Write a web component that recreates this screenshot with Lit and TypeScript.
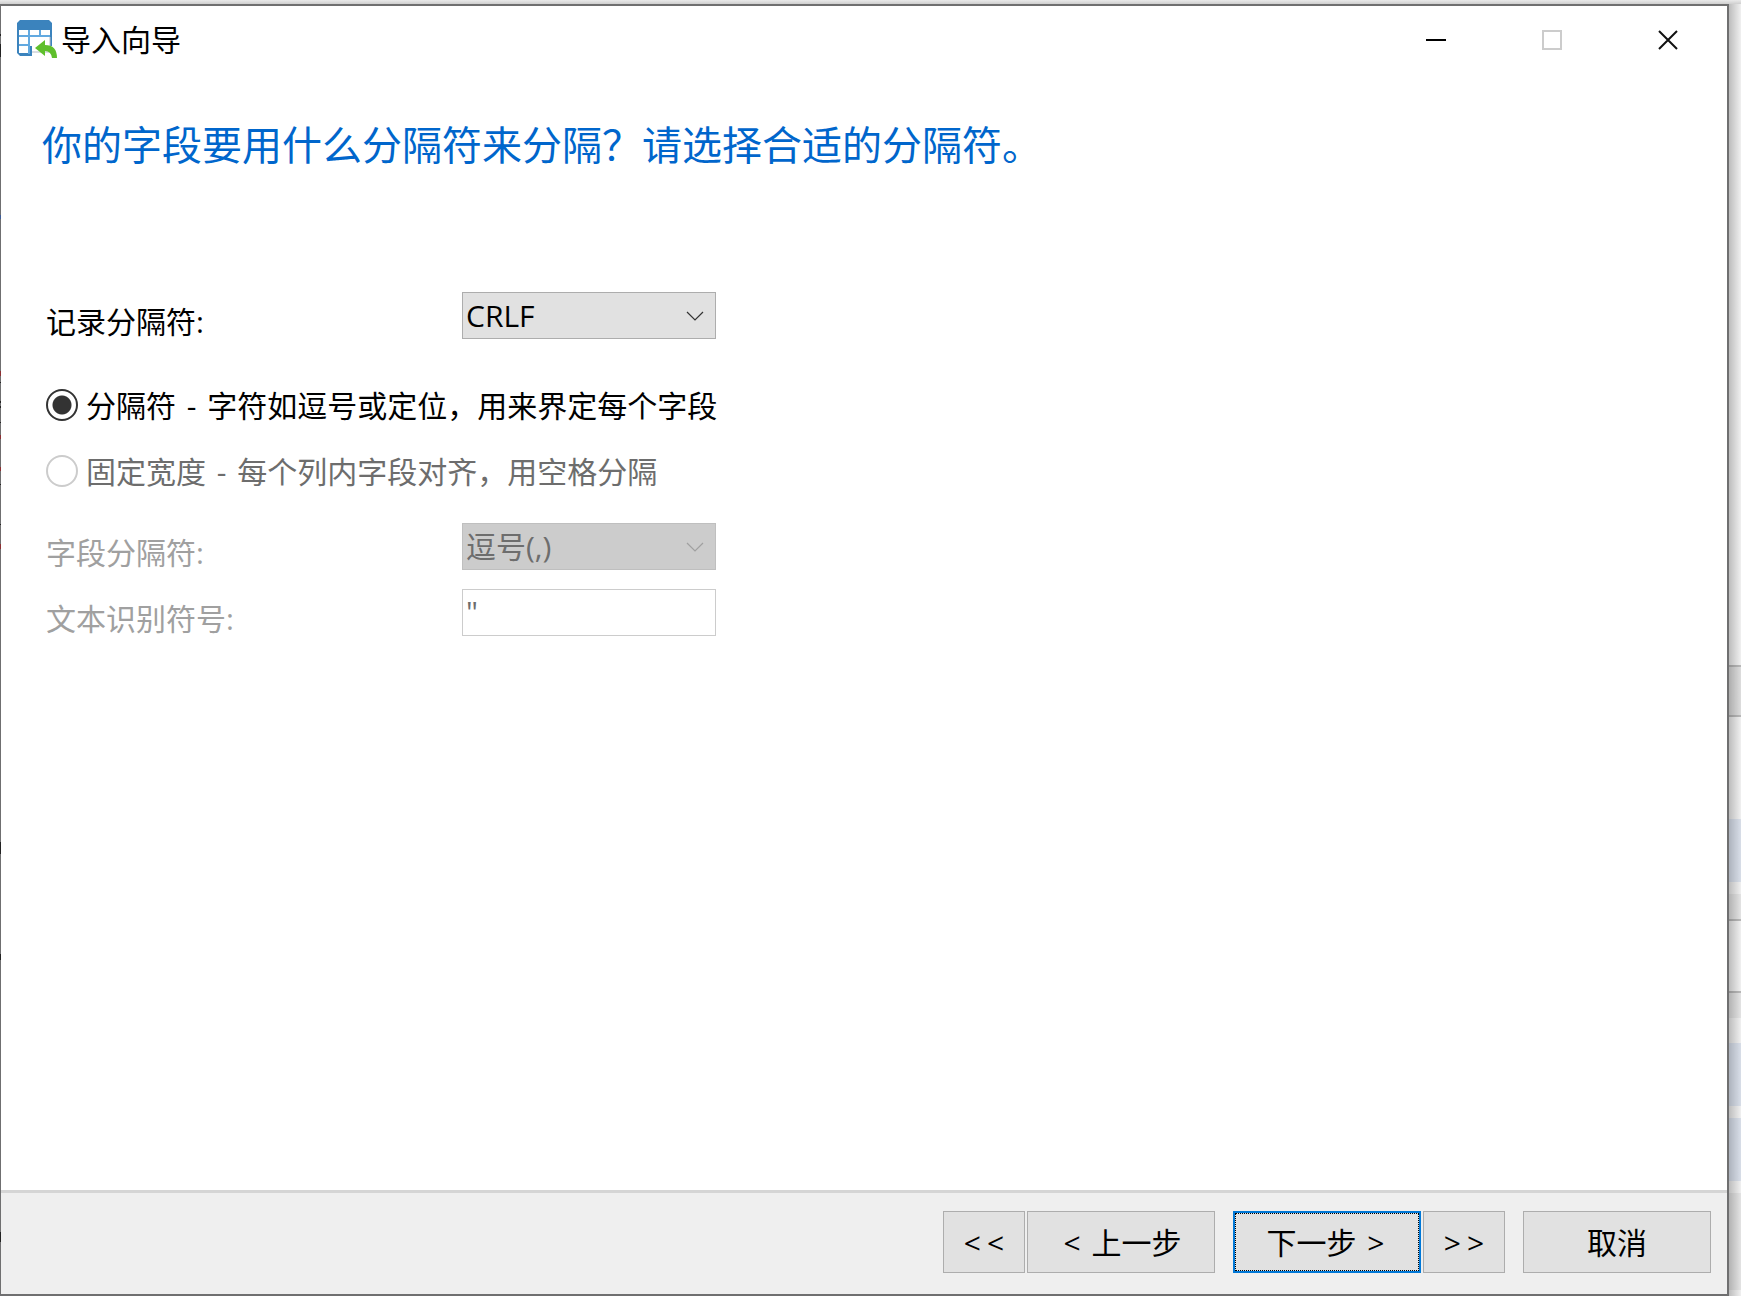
import { LitElement, html, svg, css } from "lit";
import { customElement, state } from "lit/decorators.js";

const chevron = svg`<path d="M1 1 L9 9 L17 1" fill="none" stroke="currentColor" stroke-width="1.2"/>`;

@customElement("app-root")
export class AppRoot extends LitElement {
  @state() private mode = "delimited";

  static styles = css`
    :host {
      display: block;
      min-height: 100vh;
      box-sizing: border-box;
      font-family: "Open Sans", "Noto Sans CJK SC", sans-serif;
      font-size: 30px;
      line-height: 40px;
      color: #000;
    }
    * { box-sizing: border-box; }
    .desktop {
      display: grid;
      grid-template-columns: 1px minmax(0, 1fr) 12px;
      grid-template-rows: 4px 1fr;
      min-height: 100vh;
      background: #f6f6f6;
    }
    .top-shade {
      grid-column: 1 / 4;
      background: linear-gradient(to bottom, #eaeaea, #cfcfcf);
    }
    .edge { background: #6f6f70; }
    .edge svg { width: 1px; height: 100%; display: block; }
    .window {
      display: flex;
      flex-direction: column;
      background: #fff;
      border: 2px solid #6f6f70;
      border-left: 0;
    }
    .behind {
      background: linear-gradient(to right, rgba(0,0,0,.24), rgba(0,0,0,.03)), #f8f8f8;
    }
    .behind svg { width: 12px; height: 100%; display: block; }
    .titlebar {
      display: flex;
      align-items: center;
      height: 68px;
      padding: 0 1px 0 16px;
    }
    .logo { width: 40px; height: 40px; }
    .title { margin: 0 auto 0 4px; font-size: 30px; font-weight: 400; }
    .caption {
      width: 116px;
      height: 68px;
      padding: 0;
      border: 0;
      background: none;
      display: flex;
      align-items: center;
      justify-content: center;
    }
    .caption svg { width: 20px; height: 20px; }
    .content {
      flex: 1;
      padding: 41px 41px 0;
    }
    .question {
      margin: 0 0 117px;
      font-size: 40px;
      line-height: 60px;
      font-weight: 400;
      color: #0066cc;
    }
    .form { padding-left: 4px; }
    .row {
      display: grid;
      grid-template-columns: 416px 254px;
      align-items: start;
      height: 66px;
    }
    .row label { padding-top: 10px; }
    .muted { color: #a0a0a0; }
    .combo { display: grid; }
    .combo select, .combo svg { grid-area: 1 / 1; }
    .combo svg {
      width: 18px;
      height: 10px;
      align-self: center;
      justify-self: end;
      margin-right: 12px;
      color: #333;
      pointer-events: none;
    }
    select, input[type="text"] {
      appearance: none;
      width: 100%;
      height: 47px;
      margin: 0;
      padding: 0 3px;
      border: 1px solid #adadad;
      border-radius: 0;
      background: #e1e1e1;
      font: inherit;
      color: #000;
      opacity: 1;
      outline: none;
    }
    select:disabled { background: #ccc; border-color: #bfbfbf; color: #6d6d6d; }
    select:disabled + svg { color: #a0a0a0; }
    input[type="text"] { background: #fff; border-color: #ccc; color: #6d6d6d; padding-bottom: 2px; }
    .choices { padding: 14px 0 19px; }
    .choice {
      display: flex;
      align-items: center;
      gap: 8px;
      height: 66px;
    }
    .choice .text { padding-top: 2px; }
    .choice.off { color: #6d6d6d; }
    input[type="radio"] {
      appearance: none;
      width: 32px;
      height: 32px;
      margin: 0;
      border: 2px solid #333;
      border-radius: 50%;
      background: #fff;
    }
    input[type="radio"]:checked { background: radial-gradient(circle, #333 8px, #333 9px, #fff 10px); }
    input[type="radio"]:disabled { border-color: #ccc; }
    .dash { margin: 0 3px; }
    .footer {
      display: flex;
      justify-content: flex-end;
      gap: 18px;
      padding: 18px 16px 21px;
      border-top: 3px solid #d5d5d5;
      background: #efefef;
    }
    .pair { display: flex; gap: 2px; }
    .btn {
      width: 188px;
      height: 62px;
      padding: 2px 0 0;
      border: 1px solid #adadad;
      background: #e1e1e1;
      font: inherit;
      color: #000;
    }
    .btn.small { width: 82px; }
    .btn.primary {
      border: 2px solid #0078d7;
      outline: 1px dotted #000;
      outline-offset: -3px;
    }
    .arrow { margin: 0 3px; }
  `;

  private arrow(ch: string) {
    return html`<span class="arrow">${ch}</span>`;
  }

  render() {
    return html`
      <div class="desktop">
        <div class="top-shade"></div>
        <div class="edge">
          <svg viewBox="0 0 1 1292" preserveAspectRatio="none" aria-hidden="true">
            <path d="M0 30H1V32H0ZM0 40H1V53H0ZM0 378H1V379H0ZM0 397H1V399H0ZM0 402H1V404H0ZM0 418H1V419H0ZM0 480H1V481H0ZM0 520H1V521H0ZM0 838H1V850H0ZM0 950H1V956H0ZM0 1228H1V1238H0Z" fill="#222"/>
            <path d="M0 211H1V215H0Z" fill="#3d5c96"/>
            <path d="M0 367H1V372H0ZM0 431H1V435H0ZM0 463H1V467H0ZM0 540H1V545H0Z" fill="#8c2f32"/>
          </svg>
        </div>
        <main class="window">
          <header class="titlebar">
            <svg class="logo" viewBox="0 0 40 40" aria-hidden="true">
              <path d="M3 0H32L35 3V36H3L0 33V3Z" fill="#3b83bd"/>
              <path d="M2 10H11V15H2ZM13 10H22V15H13ZM24 10H33V15H24ZM2 17H11V24H2ZM13 17H22V24H13ZM24 17H33V24H24ZM2 26H11V33H2Z" fill="#fff"/>
              <path d="M15 26H36V38H15Z" fill="#fff"/>
              <path d="M11 10H13V34H11ZM2 15H33V17H2ZM22 10H24V17H22ZM2 24H15V26H2Z" fill="#62a9e0"/>
              <path d="M13 17H33V32H15V26H13Z" fill="#fff"/>
              <path d="M15 32H33V17" fill="none" stroke="#b5bcc4" stroke-width="1"/>
              <path d="M18 28L28 20V25Q40 25 40 38H35Q34 31 28 31V36Z" fill="#5fbf2c"/>
            </svg>
            <h1 class="title">导入向导</h1>
            <button class="caption" aria-label="最小化"><svg viewBox="0 0 20 20"><path d="M0 10H20" stroke="#000" stroke-width="2"/></svg></button>
            <button class="caption" aria-label="最大化" disabled><svg viewBox="0 0 20 20"><path d="M1 1H19V19H1Z" fill="none" stroke="#ccc" stroke-width="2"/></svg></button>
            <button class="caption" aria-label="关闭"><svg viewBox="0 0 20 20"><path d="M1 1L19 19M19 1L1 19" stroke="#111" stroke-width="2"/></svg></button>
          </header>
          <section class="content">
            <h2 class="question">你的字段要用什么分隔符来分隔？请选择合适的分隔符。</h2>
            <form class="form">
              <div class="row">
                <label for="record">记录分隔符:</label>
                <div class="combo">
                  <select id="record"><option>CRLF</option></select>
                  <svg viewBox="0 0 18 10" aria-hidden="true">${chevron}</svg>
                </div>
              </div>
              <div class="choices">
                <label class="choice">
                  <input type="radio" name="mode" value="delimited" .checked=${this.mode === "delimited"} @change=${() => (this.mode = "delimited")}>
                  <span class="text">分隔符<span class="dash"> - </span>字符如逗号或定位，用来界定每个字段</span>
                </label>
                <label class="choice off">
                  <input type="radio" name="mode" value="fixed" disabled>
                  <span class="text">固定宽度<span class="dash"> - </span>每个列内字段对齐，用空格分隔</span>
                </label>
              </div>
              <div class="row muted">
                <label for="field">字段分隔符:</label>
                <div class="combo">
                  <select id="field" disabled><option>逗号(,)</option></select>
                  <svg viewBox="0 0 18 10" aria-hidden="true">${chevron}</svg>
                </div>
              </div>
              <div class="row muted">
                <label for="qualifier">文本识别符号:</label>
                <input id="qualifier" type="text" disabled value='"'>
              </div>
            </form>
          </section>
          <footer class="footer">
            <div class="pair">
              <button class="btn small">${this.arrow("<")}${this.arrow("<")}</button>
              <button class="btn">${this.arrow("<")} 上一步</button>
            </div>
            <div class="pair">
              <button class="btn primary">下一步 ${this.arrow(">")}</button>
              <button class="btn small">${this.arrow(">")}${this.arrow(">")}</button>
            </div>
            <button class="btn">取消</button>
          </footer>
        </main>
        <div class="behind">
          <svg viewBox="0 0 12 1292" preserveAspectRatio="none" aria-hidden="true">
            <g fill="#000">
              <path d="M0 661H12V663H0ZM0 711H12V713H0ZM0 915H12V917H0ZM0 987H12V989H0Z" opacity=".23"/>
              <path d="M0 663H12V711H0Z" opacity=".08"/>
              <path d="M0 890H12V915H0ZM0 989H12V1014H0ZM0 1189H12V1286H0Z" opacity=".05"/>
            </g>
            <path d="M0 815H12V878H0ZM0 1039H12V1102H0ZM0 1114H12V1177H0Z" fill="#5c80c0" opacity=".16"/>
          </svg>
        </div>
      </div>
    `;
  }
}
